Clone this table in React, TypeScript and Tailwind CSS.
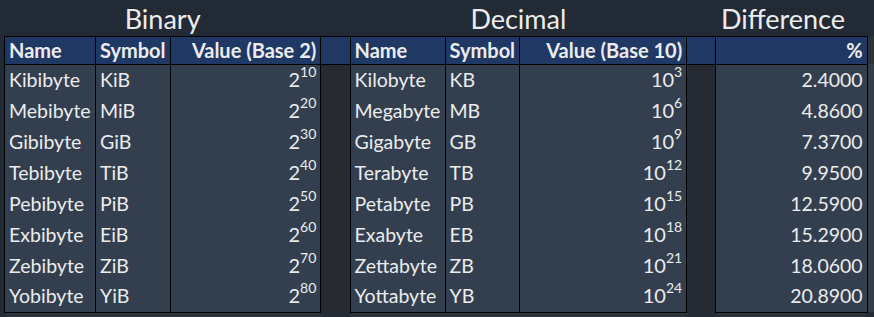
const binary = [
  ["Kibibyte", "KiB", "10"],
  ["Mebibyte", "MiB", "20"],
  ["Gibibyte", "GiB", "30"],
  ["Tebibyte", "TiB", "40"],
  ["Pebibyte", "PiB", "50"],
  ["Exbibyte", "EiB", "60"],
  ["Zebibyte", "ZiB", "70"],
  ["Yobibyte", "YiB", "80"],
];

const decimal = [
  ["Kilobyte", "KB", "3"],
  ["Megabyte", "MB", "6"],
  ["Gigabyte", "GB", "9"],
  ["Terabyte", "TB", "12"],
  ["Petabyte", "PB", "15"],
  ["Exabyte", "EB", "18"],
  ["Zettabyte", "ZB", "21"],
  ["Yottabyte", "YB", "24"],
];

const diff = ["2.4000", "4.8600", "7.3700", "9.9500", "12.5900", "15.2900", "18.0600", "20.8900"];

const Power = ({ base, exp }: { base: string; exp: string }) => (
  <span className="text-[20px]">
    {base}
    <sup className="text-[14px] relative -top-[10px]">{exp}</sup>
  </span>
);

export default function App() {
  const head = "border border-black bg-[#203864] font-bold text-[20px] px-[4px] h-[28px] leading-none";
  const cell = "border-x border-black bg-[#333f4f] px-[4px] h-[31px] align-bottom pb-[6px] leading-none";
  const gap = "bg-[#262b33]";

  return (
    <div
      className="w-[874px] h-[317px] bg-[#222a35] text-[#ececec] overflow-hidden pl-[4px]"
      style={{ fontFamily: "Lato, 'Open Sans', sans-serif" }}
    >
      <table className="border-collapse table-fixed text-[19.5px]">
        <colgroup>
          <col className="w-[91px]" />
          <col className="w-[70px]" />
          <col className="w-[154px]" />
          <col className="w-[30px]" />
          <col className="w-[95px]" />
          <col className="w-[70px]" />
          <col className="w-[171px]" />
          <col className="w-[30px]" />
          <col className="w-[152px]" />
          <col className="w-[7px]" />
        </colgroup>
        <tbody>
          <tr className="h-[36px] text-[27px] font-normal">
            <td colSpan={3} className="text-center align-bottom pb-[4px] leading-none">Binary</td>
            <td />
            <td colSpan={3} className="text-center align-bottom pb-[4px] leading-none">Decimal</td>
            <td />
            <td className="align-bottom pb-[4px] pl-[5px] leading-none whitespace-nowrap">Difference</td>
            <td />
          </tr>
          <tr>
            <td className={`${head} text-left`}>Name</td>
            <td className={`${head} text-left`}>Symbol</td>
            <td className={`${head} text-right`}>Value (Base 2)</td>
            <td className={head} />
            <td className={`${head} text-left`}>Name</td>
            <td className={`${head} text-left`}>Symbol</td>
            <td className={`${head} text-right`}>Value (Base 10)</td>
            <td className={head} />
            <td className={`${head} text-right`}>%</td>
            <td className="bg-[#2c313a]" />
          </tr>
          {binary.map((b, i) => {
            const d = decimal[i];
            const last = i === binary.length - 1 ? " border-b" : "";
            return (
              <tr key={b[0]}>
                <td className={cell + last}>{b[0]}</td>
                <td className={cell + last}>{b[1]}</td>
                <td className={`${cell}${last} text-right`}>
                  <Power base="2" exp={b[2]} />
                </td>
                <td className={gap} />
                <td className={cell + last}>{d[0]}</td>
                <td className={cell + last}>{d[1]}</td>
                <td className={`${cell}${last} text-right`}>
                  <Power base="10" exp={d[2]} />
                </td>
                <td className={gap} />
                <td className={`${cell}${last} text-right`}>{diff[i]}</td>
                <td className="bg-[#343c48]" />
              </tr>
            );
          })}
          <tr className="h-[6px]">
            <td colSpan={3} className="bg-[#2b323d]" />
            <td className={gap} />
            <td colSpan={3} className="bg-[#2b323d]" />
            <td className={gap} />
            <td className="bg-[#2b323d]" />
            <td />
          </tr>
        </tbody>
      </table>
    </div>
  );
}
